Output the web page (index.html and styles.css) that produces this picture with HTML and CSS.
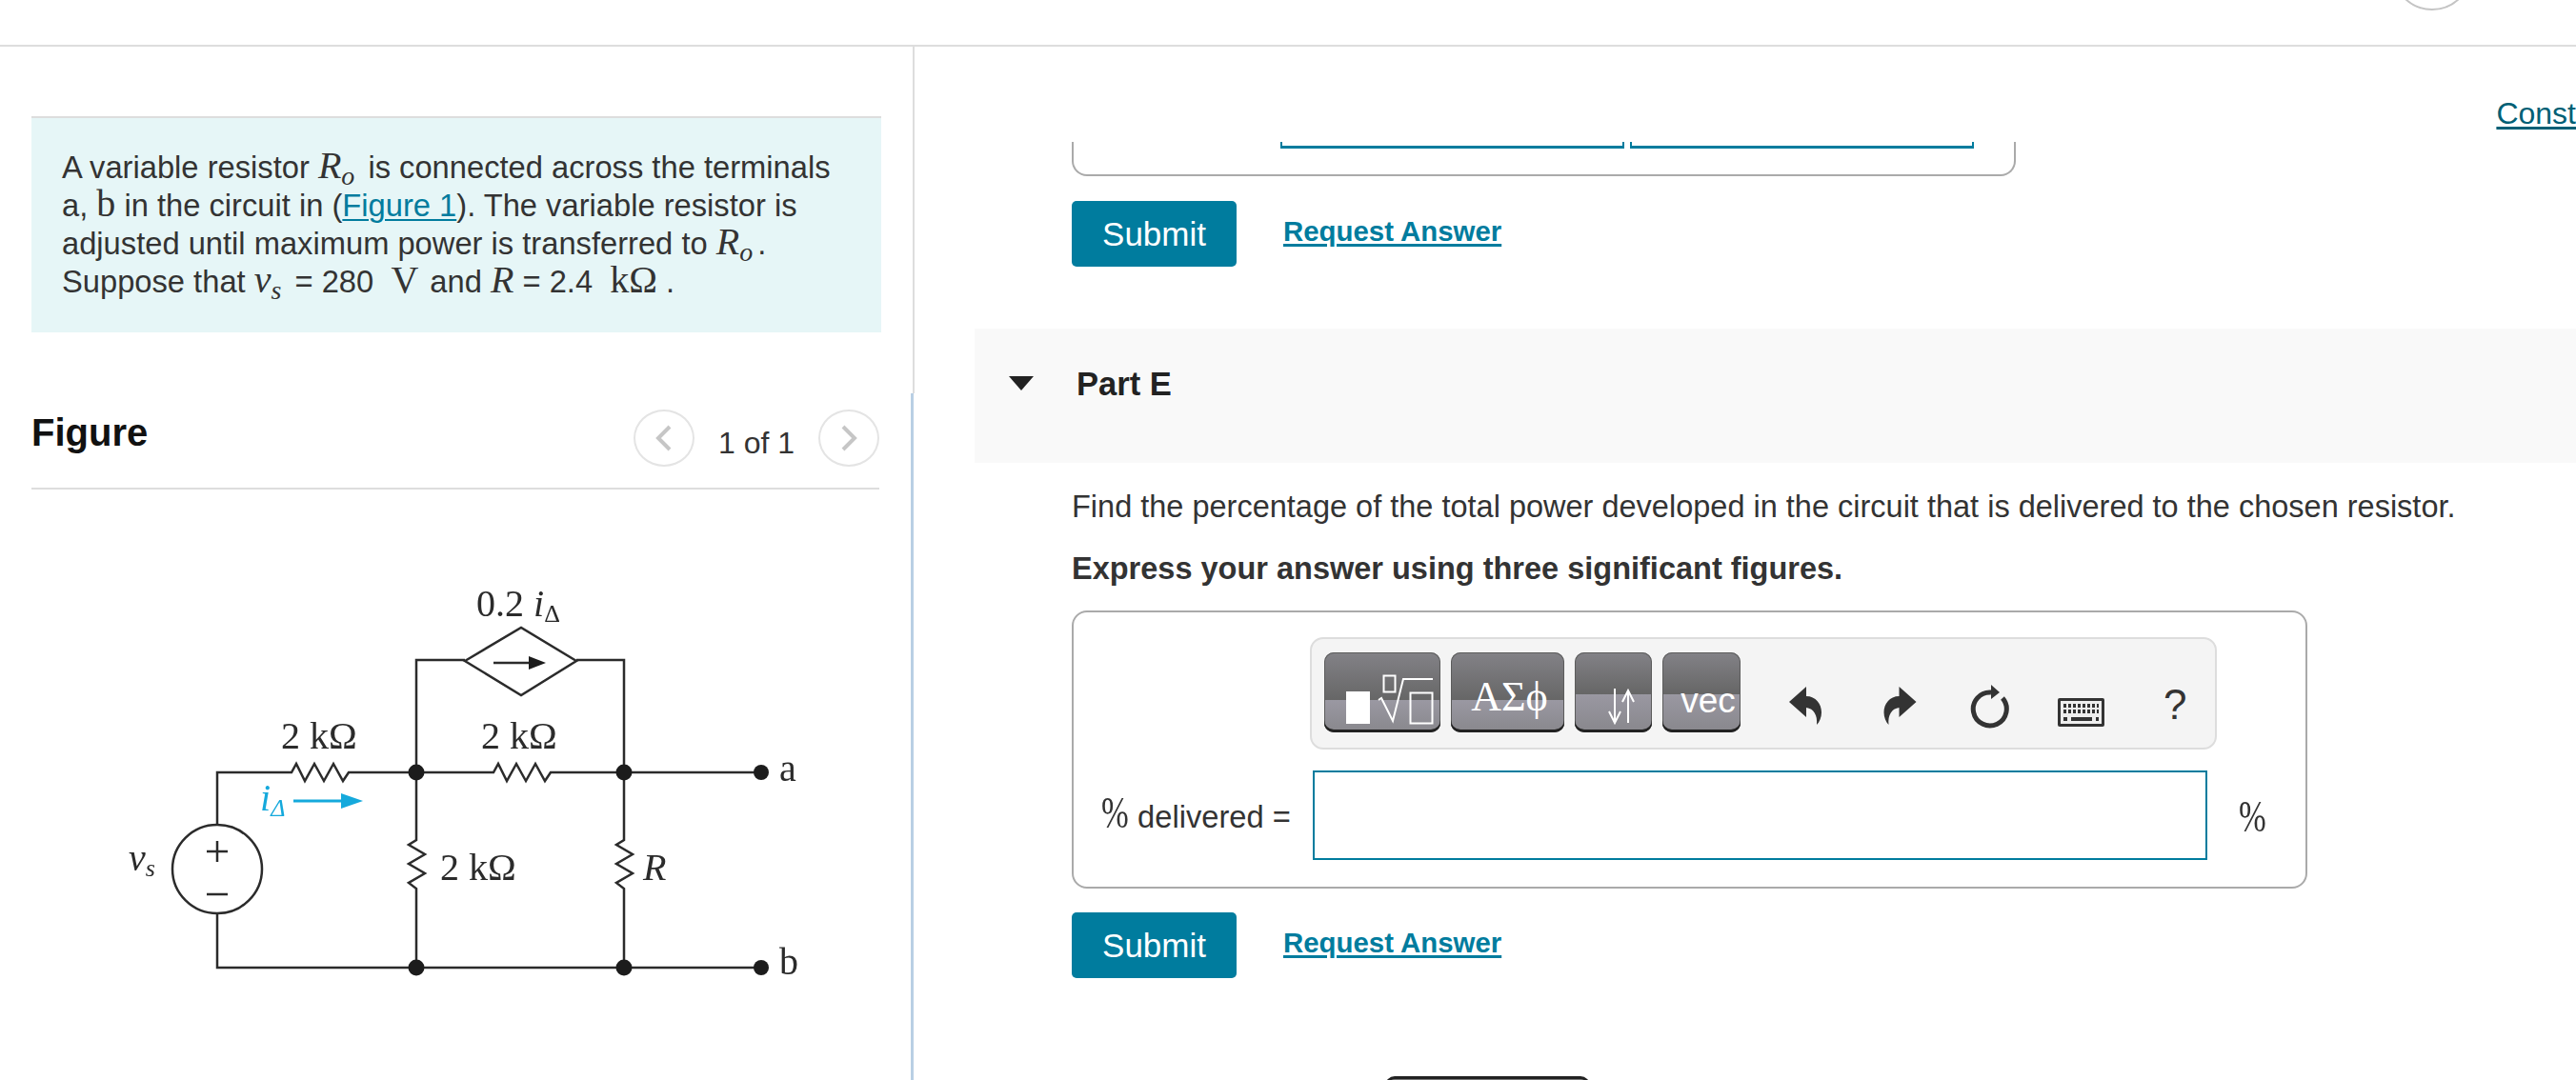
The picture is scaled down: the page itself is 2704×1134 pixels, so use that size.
FILE: index.html
```html
<!DOCTYPE html>
<html lang="en">
<head>
<meta charset="utf-8">
<title>Part E</title>
<link rel="stylesheet" href="styles.css">
</head>
<body>
<header class="topbar"><span class="top-circle"></span></header>
<main class="layout">
  <section class="left">
    <div class="intro">
      <p>A variable resistor <span class="m i">R</span><sub class="i">o</sub> is connected across the terminals<br>
      a, <span class="m">b</span> in the circuit in (<a href="#" class="link">Figure 1</a>). The variable resistor is<br>
      adjusted until maximum power is transferred to <span class="m i">R</span><sub class="i">o</sub>.<br>
      Suppose that <span class="m i vs">v</span><sub class="i">s</sub> = 280 &nbsp;<span class="m volt">V</span> and <span class="m i">R</span> = 2.4 &nbsp;<span class="m">kΩ</span> .</p>
    </div>
    <div class="fig-head">
      <h2>Figure</h2>
      <div class="pager">
        <span class="pg-btn"><svg width="18" height="28" viewBox="0 0 18 28"><path d="M15 2 3 14l12 12" class="chev"/></svg></span>
        <span class="pg-text">1 of 1</span>
        <span class="pg-btn"><svg width="18" height="28" viewBox="0 0 18 28"><path d="m3 2 12 12L3 26" class="chev"/></svg></span>
      </div>
    </div>
    <svg class="circuit" width="890" height="570" viewBox="33 515 890 570">
      <g class="wire">
        <path d="M228 867V812H306l5-9 9 18 10-18 10 18 10-18 10 18 6-9H518l5-9 9 18 10-18 10 18 10-18 10 18 6-9H799"/>
        <path d="M228 960V1017H799"/>
        <path d="M437 812V883l-8 5 17 10-17 10 17 10-17 10 8 6V1017"/>
        <path d="M655 812V883l-8 5 17 10-17 10 17 10-17 10 8 6V1017"/>
        <path d="M437 812V694H488M605 694H655V812"/>
        <path d="M488 695 547 660 605 695 547 731Z"/>
        <ellipse cx="228" cy="913.500" rx="47" ry="46.500"/>
        <path d="M228 884V906M217 895H239M217 940H239"/>
        <path d="M518 697H558"/>
      </g>
      <path d="M555 690 573 697 555 704Z" class="ink"/>
      <g class="ink">
        <circle cx="437" cy="812" r="8.500"/><circle cx="655" cy="812" r="8.500"/><circle cx="799" cy="812" r="8"/>
        <circle cx="437" cy="1017" r="8.500"/><circle cx="655" cy="1017" r="8.500"/><circle cx="799" cy="1017" r="8"/>
      </g>
      <path d="M308 842H365" class="blue-wire"/>
      <path d="M358 834 381 842 358 850Z" class="blue"/>
      <g class="ckt-text">
        <text x="500" y="648">0.2 <tspan class="it">i</tspan><tspan class="sm" dy="6">Δ</tspan></text>
        <text x="295" y="787">2 kΩ</text>
        <text x="505" y="787">2 kΩ</text>
        <text x="462" y="925">2 kΩ</text>
        <text x="675" y="925" class="it">R</text>
        <text x="135" y="915" class="it">v<tspan class="sm" dy="6">s</tspan></text>
        <text x="818" y="821">a</text>
        <text x="818" y="1024">b</text>
        <text x="273" y="852" class="it blue">i<tspan class="sm" dy="6">Δ</tspan></text>
      </g>
    </svg>
  </section>
  <div class="divider"><span class="div-top"></span><span class="div-bottom"></span></div>
  <section class="right">
    <div class="const-row"><a href="#" class="const">Const</a></div>
    <div class="clipped">
      <span class="frag frag-a"></span><span class="frag frag-b"></span>
    </div>
    <div class="actions first">
      <a href="#" class="submit">Submit</a>
      <a href="#" class="request">Request Answer</a>
    </div>
    <div class="part-bar">
      <span class="tri"></span>
      <h3>Part E</h3>
    </div>
    <p class="find">Find the percentage of the total power developed in the circuit that is delivered to the chosen resistor.</p>
    <p class="express">Express your answer using three significant figures.</p>
    <div class="answer">
      <div class="toolbar">
        <span class="btn b1">
          <svg width="122" height="84" viewBox="0 0 122 84">
            <rect x="23" y="41" width="25" height="34" fill="#fff"/>
            <rect x="62.500" y="24.500" width="12" height="17" class="ol"/>
            <path d="M57 50l3-2 12 24 11-44h31" class="ol"/>
            <rect x="90.500" y="42.500" width="23" height="32" class="ol"/>
          </svg>
        </span>
        <span class="btn b2"><span class="greek">ΑΣϕ</span></span>
        <span class="btn b3 alt">
          <svg width="81" height="84" viewBox="0 0 81 84">
            <path d="M42 38V72M36 62l6 12 6-12M56 74V40M50 52l6-12 6 12" class="ol"/>
          </svg>
        </span>
        <span class="btn b4 alt"><span class="vec">vec</span></span>
        <svg class="tool undo" width="34" height="40" viewBox="0 0 34 40"><path d="M0 16 18 0V10C28 10 34 18 34 27 34 32 32 37 29 40 30 30 26 23 18 22V32Z"/></svg>
        <svg class="tool redo" width="35" height="40" viewBox="0 0 34 40"><path d="M34 16 16 0V10C6 10 0 18 0 27 0 32 2 37 5 40 4 30 8 23 16 22V32Z"/></svg>
        <svg class="tool reset" width="41" height="46" viewBox="0 0 41 46"><path d="M22 8A17.500 17.500 0 1 0 34 14" class="ring"/><path d="M22 0 31 8 22 15Z"/></svg>
        <svg class="tool kbd" width="49" height="30" viewBox="0 0 49 30">
          <rect width="49" height="30" rx="2"/>
          <rect x="3" y="3" width="43" height="24" fill="#eee"/>
          <path d="M6 8H43M6 14H43" class="keys"/>
          <path d="M14 22H36" class="space"/>
          <path d="M6 22H10M40 22H43" class="space"/>
        </svg>
        <span class="help">?</span>
      </div>
      <div class="answer-row">
        <label class="lbl"><span class="pct">%</span> delivered =</label>
        <span class="input"></span>
        <span class="pct unit">%</span>
      </div>
    </div>
    <div class="actions second">
      <a href="#" class="submit">Submit</a>
      <a href="#" class="request">Request Answer</a>
    </div>
    <div class="next-btn"></div>
  </section>
</main>
</body>
</html>
```
FILE: styles.css
```css
* { box-sizing: border-box; }
html, body { margin: 0; padding: 0; }
body {
  width: 2704px;
  height: 1134px;
  overflow: hidden;
  background: #fff;
  color: #333;
  font-family: "Liberation Sans", Arial, sans-serif;
  font-size: 32px;
  line-height: 40px;
}
a { color: #007c9e; }
p, h2, h3 { margin: 0; }

.topbar {
  position: relative;
  height: 49px;
  border-bottom: 2px solid #ddd;
  overflow: hidden;
}
.top-circle {
  position: absolute;
  left: 2511px;
  top: -73px;
  width: 84px;
  height: 84px;
  border: 2px solid #c4c4c4;
  border-radius: 50%;
}

.layout {
  display: grid;
  grid-template-columns: 956px 4px 1fr;
  height: 1085px;
}

/* left column */
.left { padding: 73px 0 0 33px; min-width: 0; }
.intro {
  width: 892px;
  height: 227px;
  padding: 32px 0 0 32px;
  border-top: 2px solid #ddd;
  background: #e6f6f7;
  font-size: 32.700px;
}
.m {
  font-family: "Liberation Serif", serif;
  font-size: 40px;
  line-height: 0;
}
.i { font-family: "Liberation Serif", serif; font-style: italic; }
.vs { font-size: 40px; }
.volt { margin-right: 3px; }
sub {
  margin-right: 5px;
  font-size: 28px;
  line-height: 0;
  vertical-align: -7px;
}
.link { text-decoration-thickness: 2px; text-underline-offset: 3px; }

.fig-head {
  display: flex;
  justify-content: space-between;
  width: 890px;
  height: 84px;
  margin-top: 81px;
  border-bottom: 2px solid #ddd;
}
.fig-head h2 {
  margin-top: 1px;
  color: #111;
  font-size: 40px;
  line-height: 46px;
}
.pager {
  display: flex;
  justify-content: space-between;
  width: 258px;
}
.pg-btn {
  display: flex;
  align-items: center;
  justify-content: center;
  width: 64px;
  height: 60px;
  border: 2px solid #e4e4e4;
  border-radius: 50%;
}
.chev { fill: none; stroke: #c6c6c6; stroke-width: 4; }
.pg-text { margin-top: 15px; }

.circuit { display: block; filter: blur(0.5px); }
.wire { fill: none; stroke: #2b2b2b; stroke-width: 2.5; }
.ink { fill: #1c1c1c; }
.blue { fill: #15a9dc; }
.blue-wire { fill: none; stroke: #15a9dc; stroke-width: 3; }
.ckt-text text {
  font-family: "Liberation Serif", serif;
  font-size: 40px;
  fill: #2b2b2b;
}
.ckt-text text.blue { fill: #15a9dc; }
.it { font-style: italic; }
.sm { font-size: 26px; }

/* divider */
.divider { display: flex; flex-direction: column; height: 100%; }
.div-top { width: 2px; height: 364px; margin-left: 2px; background: #ddd; }
.div-bottom { flex: 1; width: 3px; background: #b9cfe4; }

/* right column */
.right { display: flex; flex-direction: column; min-width: 0; overflow: hidden; }
.right > * { flex: none; }
.const-row {
  display: flex;
  justify-content: flex-end;
  height: 100px;
  padding-top: 50px;
}
.const {
  color: #005f75;
  text-decoration-thickness: 3px;
  text-underline-offset: 3px;
}
.clipped {
  display: flex;
  gap: 6px;
  width: 991px;
  height: 36px;
  margin-left: 165px;
  padding-left: 217px;
  border: 2px solid #aaa;
  border-top: 0;
  border-radius: 0 0 16px 16px;
}
.frag {
  width: 361px;
  height: 7px;
  border: 2px solid #007c9e;
  border-top: 0;
  border-bottom-width: 3px;
}
.actions {
  display: flex;
  align-items: center;
  gap: 49px;
  margin-left: 165px;
}
.actions.first { margin-top: 26px; }
.actions.second { margin-top: 25px; }
.submit {
  display: flex;
  align-items: center;
  justify-content: center;
  width: 173px;
  height: 69px;
  border-radius: 5px;
  background: #007c9e;
  color: #fff;
  font-size: 35px;
  text-decoration: none;
}
.request {
  margin-bottom: 5px;
  font-size: 29.400px;
  font-weight: 700;
  text-decoration-thickness: 3px;
  text-underline-offset: 3px;
}
.part-bar {
  display: flex;
  align-items: flex-start;
  gap: 45px;
  height: 141px;
  margin-top: 65px;
  margin-left: 63px;
  padding-left: 36px;
  background: #f9f9f9;
}
.tri {
  width: 26px;
  height: 15px;
  margin-top: 50px;
  border-style: solid;
  border-width: 15px 13px 0;
  border-color: #222 transparent transparent;
}
.part-bar h3 {
  margin-top: 38px;
  color: #222;
  font-size: 34.600px;
  line-height: 40px;
}
.find { margin: 26px 0 0 165px; white-space: nowrap; font-size: 32.500px; }
.express { margin: 25px 0 0 165px; white-space: nowrap; font-size: 32.500px; font-weight: 700; }

.answer {
  width: 1297px;
  height: 292px;
  margin: 24px 0 0 165px;
  border: 2px solid #aaa;
  border-radius: 16px;
}
.toolbar {
  display: flex;
  align-items: flex-start;
  width: 952px;
  height: 118px;
  margin: 26px 0 0 248px;
  padding: 14px 0 0 13px;
  border: 2px solid #ddd;
  border-radius: 14px;
  background: #f4f4f4;
}
.btn {
  display: flex;
  align-items: flex-end;
  justify-content: center;
  flex: none;
  height: 84px;
  margin-right: 11px;
  border-radius: 10px;
  box-shadow: inset 0 -3px 0 #222, inset 0 0 0 1px #5c5c5c;
  background: linear-gradient(#838287, #666 60%, #9a98a2 60%, #88878c);
  color: #fff;
}
.btn.alt { background: linear-gradient(#838287, #666 52%, #9a98a2 52%, #88878c); }
.b1 { width: 122px; }
.b2 { width: 119px; }
.b3 { width: 81px; }
.b4 { width: 82px; margin-right: 0; }
.ol { fill: none; stroke: #fff; stroke-width: 2; }
.greek {
  padding: 0 0 17px 4px;
  font-family: "Liberation Serif", serif;
  font-size: 44px;
  line-height: 40px;
}
.vec { padding: 0 0 13px 14px; font-size: 37px; line-height: 40px; }
.tool { flex: none; fill: #333; }
.undo { margin: 36px 0 0 51px; }
.redo { margin: 36px 0 0 65px; }
.reset { margin: 34px 0 0 56px; }
.kbd { margin: 48px 0 0 51px; }
.ring { fill: none; stroke: #333; stroke-width: 5; }
.keys { fill: none; stroke: #333; stroke-width: 4; stroke-dasharray: 3 2; }
.space { fill: none; stroke: #333; stroke-width: 4; }
.help { margin: 30px 0 0 62px; font-size: 44px; line-height: 50px; }

.answer-row {
  display: flex;
  align-items: center;
  margin-top: 22px;
  padding-left: 29px;
}
.lbl { width: 222px; margin-top: 4px; font-size: 32.700px; white-space: nowrap; }
.pct {
  display: inline-block;
  width: 29px;
  font-family: "Liberation Serif", serif;
  font-size: 46px;
  line-height: 30px;
  transform: scaleX(0.75);
  transform-origin: left center;
}
.input {
  flex: none;
  width: 939px;
  height: 94px;
  border: 2px solid #007c9e;
  background: #fff;
}
.unit { margin: 4px 0 0 33px; }

.next-btn {
  width: 215px;
  height: 30px;
  margin: 103px 0 0 494px;
  border: 3px solid #222;
  border-radius: 10px 10px 0 0;
  background: #777;
}
```
